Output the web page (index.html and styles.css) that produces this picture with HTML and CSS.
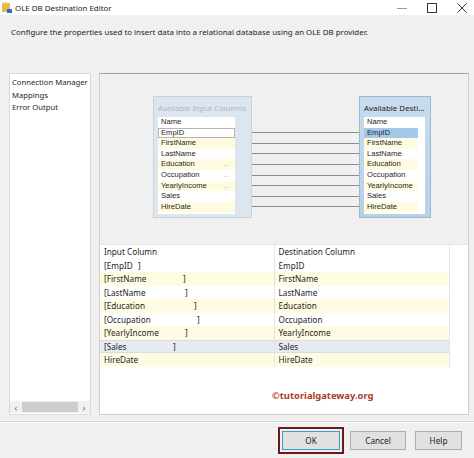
FILE: index.html
```html
<!DOCTYPE html>
<html lang="en">
<head>
  <meta charset="UTF-8" />
  <title>OLE DB Destination Editor</title>
  <link rel="stylesheet" href="styles.css">
</head>
<body>
  <div class="window">

    <div class="titlebar">
      <svg class="app-icon" width="10" height="11" viewBox="0 0 10 11">
        <rect x="0" y="1" width="8" height="9" fill="#e8b84a"/>
        <rect x="1" y="0" width="4" height="2" fill="#f3d27a"/>
        <rect x="5" y="7" width="5" height="4" fill="#2a6fc0"/>
      </svg>
      <span class="title">OLE DB Destination Editor</span>
      <div class="controls">
        <svg width="10" height="10" viewBox="0 0 10 10"><path d="M0 5.5h10" stroke="#999" stroke-width="1"/></svg>
        <svg width="10" height="10" viewBox="0 0 10 10"><rect x="0.5" y="0.5" width="9" height="9" fill="none" stroke="#333" stroke-width="1"/></svg>
        <svg width="10" height="10" viewBox="0 0 10 10"><path d="M0.5 0.5l9 9M9.5 0.5l-9 9" stroke="#333" stroke-width="1"/></svg>
      </div>
    </div>

    <div class="desc">Configure the properties used to insert data into a relational database using an OLE DB provider.</div>

    <div class="main">
      <!-- left page list -->
      <div class="nav">
        <ul class="nav-list">
          <li>Connection Manager</li>
          <li>Mappings</li>
          <li>Error Output</li>
        </ul>
        <div class="hscroll">
          <span class="arrow">&lsaquo;</span>
          <span class="thumb"></span>
          <span class="arrow">&rsaquo;</span>
        </div>
      </div>

      <!-- mappings panel -->
      <div class="panel">
        <div class="diagram">
          <div class="box box-input">
            <div class="box-head">Available Input Columns</div>
            <ul class="box-list">
              <li>Name</li>
              <li class="focus">EmpID</li>
              <li class="alt">FirstName</li>
              <li>LastName</li>
              <li class="alt">Education<span class="dots">...</span></li>
              <li>Occupation<span class="dots">...</span></li>
              <li class="alt">YearlyIncome<span class="dots">...</span></li>
              <li>Sales</li>
              <li class="alt">HireDate</li>
            </ul>
          </div>

          <svg class="links" width="108" height="100" viewBox="0 0 108 100">
            <g stroke="#8c8c8c" stroke-width="1">
              <path d="M0 16.5h107"/>
              <path d="M0 27.5h107"/>
              <path d="M0 37.5h107"/>
              <path d="M0 48.5h107"/>
              <path d="M0 59.5h107"/>
              <path d="M0 69.5h107"/>
              <path d="M0 80.5h107"/>
              <path d="M0 90.5h107"/>
            </g>
          </svg>

          <div class="box box-dest">
            <div class="box-head">Available Desti...</div>
            <ul class="box-list">
              <li>Name</li>
              <li class="sel">EmpID</li>
              <li class="alt">FirstName</li>
              <li>LastName</li>
              <li class="alt">Education</li>
              <li>Occupation</li>
              <li class="alt">YearlyIncome</li>
              <li>Sales</li>
              <li class="alt">HireDate</li>
            </ul>
          </div>
        </div>

        <div class="grid">
          <div class="row head">
            <div class="cell">Input Column</div>
            <div class="cell">Destination Column</div>
          </div>
          <div class="row">
            <div class="cell"><span class="src" style="width:34px">[EmpID</span>]</div>
            <div class="cell">EmpID</div>
          </div>
          <div class="row alt">
            <div class="cell"><span class="src" style="width:79px">[FirstName</span>]</div>
            <div class="cell">FirstName</div>
          </div>
          <div class="row">
            <div class="cell"><span class="src" style="width:81px">[LastName</span>]</div>
            <div class="cell">LastName</div>
          </div>
          <div class="row alt">
            <div class="cell"><span class="src" style="width:90px">[Education</span>]</div>
            <div class="cell">Education</div>
          </div>
          <div class="row">
            <div class="cell"><span class="src" style="width:93px">[Occupation</span>]</div>
            <div class="cell">Occupation</div>
          </div>
          <div class="row alt">
            <div class="cell"><span class="src" style="width:81px">[YearlyIncome</span>]</div>
            <div class="cell">YearlyIncome</div>
          </div>
          <div class="row sel">
            <div class="cell"><span class="src" style="width:69px">[Sales</span>]</div>
            <div class="cell">Sales</div>
          </div>
          <div class="row alt">
            <div class="cell">HireDate</div>
            <div class="cell">HireDate</div>
          </div>
          <div class="watermark">&copy;tutorialgateway.org</div>
        </div>
      </div>
    </div>

    <div class="footer">
      <div class="ok-wrap"><button class="btn ok">OK</button></div>
      <button class="btn">Cancel</button>
      <button class="btn help">Help</button>
    </div>

  </div>
</body>
</html>
```

FILE: styles.css
```css
* {
  box-sizing: border-box;
}

body {
  margin: 0;
  font-family: 'Noto Sans', sans-serif;
  font-size: 8px;
  color: #1e1e1e;
  background-color: #f0f0f0;
}

ul {
  list-style: none;
  margin: 0;
  padding: 0;
}

.window {
  width: 474px;
  height: 458px;
  display: flex;
  flex-direction: column;
}

/* title bar */
.titlebar {
  height: 15px;
  background-color: #ffffff;
  display: flex;
  align-items: center;
  padding-left: 2px;
}

.app-icon {
  margin-right: 3px;
}

.title {
  font-size: 7.9px;
  color: #222;
}

.controls {
  margin-left: auto;
  display: flex;
  gap: 20px;
  padding-right: 7px;
}

.desc {
  height: 58px;
  padding: 12px 0 0 11px;
  font-size: 7.9px;
  color: #222;
}

/* body */
.main {
  height: 342px;
  display: flex;
  padding: 0 5px 0 9px;
  gap: 8px;
}

.nav {
  width: 82px;
  background-color: #fff;
  border: 1px solid #d9d9d9;
  display: flex;
  flex-direction: column;
}

.nav-list {
  flex: 1;
  padding: 2px 0 0 2px;
}

.nav-list li {
  height: 12.5px;
  line-height: 12.5px;
  font-size: 7.7px;
  white-space: nowrap;
}

.hscroll {
  height: 12px;
  margin-bottom: 1px;
  display: flex;
  align-items: center;
  background-color: #f0f0f0;
}

.hscroll .arrow {
  width: 12px;
  text-align: center;
  font-size: 9px;
  color: #606060;
}

.hscroll .thumb {
  width: 56px;
  height: 10px;
  background-color: #cdcdcd;
}

.panel {
  flex: 1;
  border: 1px solid #cfcfcf;
  border-top-color: #a0a0a0;
  display: flex;
  flex-direction: column;
  background-color: #fff;
}

/* diagram of columns */
.diagram {
  height: 171px;
  position: relative;
  background-color: #f0f0f0;
  border-bottom: 1px solid #e2e2e2;
}

.box {
  position: absolute;
  top: 22px;
  height: 122px;
  border: 1px solid #a9c0d8;
  padding: 0 0 0 4px;
}

.box-input {
  left: 53px;
  width: 99px;
  background-color: #dde5ee;
  border-color: #c8d3df;
}

.box-dest {
  left: 259px;
  width: 72px;
  background: linear-gradient(#c9dcef, #b9d0e8);
  border-color: #9db8d3;
}

.box-head {
  height: 20px;
  line-height: 22px;
  font-size: 7.9px;
  white-space: nowrap;
}

.box-input .box-head {
  color: #a9b7c7;
  font-size: 7.7px;
}

.box-list {
  background-color: #fff;
  font-family: 'Liberation Sans', sans-serif;
  font-size: 7.6px;
  padding-bottom: 2px;
}

.box-input .box-list {
  width: 77px;
}

.box-dest .box-list {
  width: 61px;
  padding-right: 7px;
}

.box-list li {
  height: 10.6px;
  line-height: 10.6px;
  padding-left: 3px;
  display: flex;
}

.box-list li.alt {
  background-color: #fffbe1;
}

.box-list li.focus {
  border: 1px solid #b5b5b5;
  line-height: 8.6px;
  padding-left: 2px;
}

.box-list li.sel {
  background-color: #a3c9ea;
}

.dots {
  margin-left: auto;
  padding-right: 6px;
  color: #888;
  font-size: 6px;
}

.links {
  position: absolute;
  left: 152px;
  top: 42px;
}

/* mapping grid */
.grid {
  flex: 1;
  position: relative;
  font-size: 8.2px;
}

.row {
  display: flex;
  height: 13.5px;
  width: 350px;
  border-right: 1px solid #e6e6e6;
}

.row.alt {
  background-color: #fffbe3;
}

.row.sel {
  background-color: #e6ebf2;
  border-top: 1px solid #d7dde6;
  border-bottom: 1px solid #d7dde6;
}

.cell {
  width: 175px;
  line-height: 13.5px;
  padding-left: 4px;
  white-space: nowrap;
}

.row .cell:first-child {
  border-right: 1px solid #e4e4e4;
}

.row.sel .cell {
  line-height: 11.5px;
}

.src {
  display: inline-block;
}

.watermark {
  position: absolute;
  left: 172px;
  top: 144px;
  font-size: 9.4px;
  font-weight: bold;
  color: #a83a28;
}

/* footer buttons */
.footer {
  flex: 1;
  margin-top: 6px;
  border-top: 1px solid #d5d5d5;
  box-shadow: inset 0 1px 0 #ffffff;
  display: flex;
  justify-content: flex-end;
  align-items: flex-start;
  padding: 6px 12px 0 0;
  gap: 6px;
}

.ok-wrap {
  border: 2px solid #6b1a1a;
  padding: 2px;
  margin-top: -1px;
}

.btn {
  width: 56px;
  height: 19px;
  background-color: #e1e1e1;
  border: 1px solid #adadad;
  font-family: 'Noto Sans', sans-serif;
  font-size: 8.2px;
  color: #222;
  padding: 0;
  margin-top: 3px;
}

.ok-wrap .btn {
  margin-top: 0;
  width: 58px;
  border-color: #3e9ad4;
}

.btn.help {
  width: 47px;
  margin-left: 3px;
}
```
